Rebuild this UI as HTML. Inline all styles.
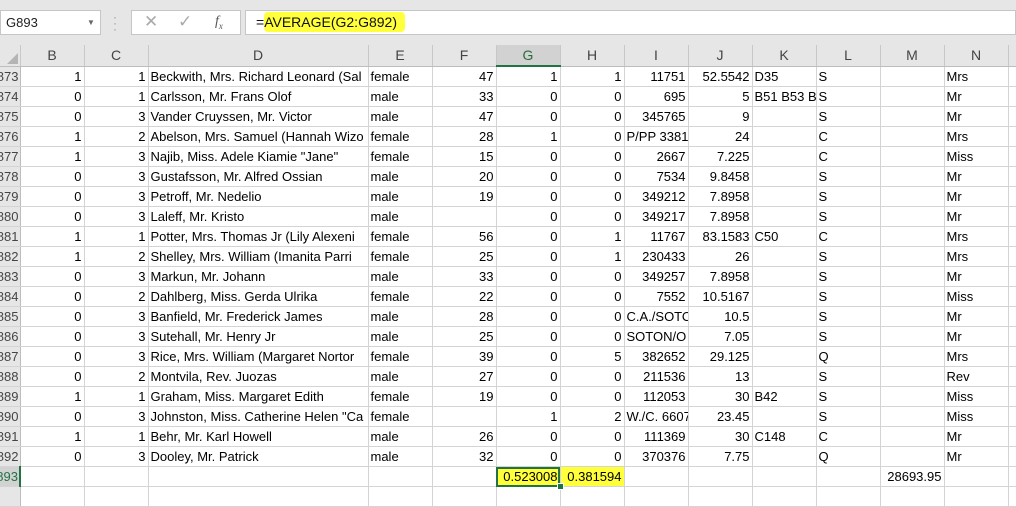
<!DOCTYPE html>
<html><head><meta charset="utf-8"><style>
body{margin:0;width:1016px;height:491px;overflow:hidden;background:#e6e6e6;font-family:"Liberation Sans",Arial,sans-serif;position:relative}
.box{position:absolute;top:10px;height:25px;background:#fff;border:1px solid #c6c6c6;box-sizing:border-box}
table{position:absolute;left:0;top:45px;width:1028px;border-collapse:collapse;table-layout:fixed;background:#fff;font-size:13px}
td{box-sizing:border-box;height:20px;padding:0 2px;border-right:1px solid #d4d4d4;border-bottom:1px solid #d4d4d4;white-space:nowrap;overflow:hidden;color:#000;line-height:19px}
tr.h td{background:#e6e6e6;text-align:center;color:#444;border-right:1px solid #c8c8c8;border-bottom:1px solid #bdbdbd;height:21px;font-size:14px}
td.rh{background:#e6e6e6;color:#444;text-align:right;padding:0 1px 0 0;border-right:1px solid #bdbdbd;direction:rtl}
.r{text-align:right}
.hl{background:#ffff3c}
</style></head><body>
<div class="box" style="left:0;width:101px;font-size:13px;color:#222;line-height:23px;padding-left:5px">G893<span style="position:absolute;left:86px;top:0;font-size:8px;color:#666">▼</span></div>
<div style="position:absolute;left:113px;top:14px;color:#999;font-size:12px;line-height:6px">·<br>·<br>·</div>
<div class="box" style="left:131px;width:110px;color:#aaa;font-size:17px;line-height:22px"><span style="position:absolute;left:12px">✕</span><span style="position:absolute;left:46px">✓</span><span style="position:absolute;left:83px;font-family:'Liberation Serif',serif;font-style:italic;font-size:14px;color:#555">f<sub style="font-size:9px">x</sub></span></div>
<div class="box" style="left:245px;width:771px;font-size:14px;line-height:23px;padding-left:10px;color:#111">=<span class="hl" style="border-radius:4px;padding:2px 8px 2px 0">AVERAGE(G2:G892)</span></div>
<table>
<colgroup><col style="width:20px"><col style="width:64px"><col style="width:64px"><col style="width:220px"><col style="width:64px"><col style="width:64px"><col style="width:64px"><col style="width:64px"><col style="width:64px"><col style="width:64px"><col style="width:64px"><col style="width:64px"><col style="width:64px"><col style="width:64px"><col style="width:20px"></colgroup>
<tr class="h"><td style="position:relative"><span style="position:absolute;right:2px;bottom:2px;width:0;height:0;border-left:11px solid transparent;border-bottom:11px solid #b4b4b4"></span></td><td>B</td><td>C</td><td>D</td><td>E</td><td>F</td><td style="background:#d2d2d2;color:#2a6b3e;border-bottom:2px solid #217346">G</td><td>H</td><td>I</td><td>J</td><td>K</td><td>L</td><td>M</td><td>N</td><td></td></tr>
<tr><td class="rh">873</td><td class="r">1</td><td class="r">1</td><td>Beckwith, Mrs. Richard Leonard (Sal</td><td>female</td><td class="r">47</td><td class="r">1</td><td class="r">1</td><td class="r">11751</td><td class="r">52.5542</td><td>D35</td><td>S</td><td></td><td>Mrs</td><td></td></tr>
<tr><td class="rh">874</td><td class="r">0</td><td class="r">1</td><td>Carlsson, Mr. Frans Olof</td><td>male</td><td class="r">33</td><td class="r">0</td><td class="r">0</td><td class="r">695</td><td class="r">5</td><td>B51 B53 B55</td><td>S</td><td></td><td>Mr</td><td></td></tr>
<tr><td class="rh">875</td><td class="r">0</td><td class="r">3</td><td>Vander Cruyssen, Mr. Victor</td><td>male</td><td class="r">47</td><td class="r">0</td><td class="r">0</td><td class="r">345765</td><td class="r">9</td><td></td><td>S</td><td></td><td>Mr</td><td></td></tr>
<tr><td class="rh">876</td><td class="r">1</td><td class="r">2</td><td>Abelson, Mrs. Samuel (Hannah Wizo</td><td>female</td><td class="r">28</td><td class="r">1</td><td class="r">0</td><td>P/PP 3381</td><td class="r">24</td><td></td><td>C</td><td></td><td>Mrs</td><td></td></tr>
<tr><td class="rh">877</td><td class="r">1</td><td class="r">3</td><td>Najib, Miss. Adele Kiamie "Jane"</td><td>female</td><td class="r">15</td><td class="r">0</td><td class="r">0</td><td class="r">2667</td><td class="r">7.225</td><td></td><td>C</td><td></td><td>Miss</td><td></td></tr>
<tr><td class="rh">878</td><td class="r">0</td><td class="r">3</td><td>Gustafsson, Mr. Alfred Ossian</td><td>male</td><td class="r">20</td><td class="r">0</td><td class="r">0</td><td class="r">7534</td><td class="r">9.8458</td><td></td><td>S</td><td></td><td>Mr</td><td></td></tr>
<tr><td class="rh">879</td><td class="r">0</td><td class="r">3</td><td>Petroff, Mr. Nedelio</td><td>male</td><td class="r">19</td><td class="r">0</td><td class="r">0</td><td class="r">349212</td><td class="r">7.8958</td><td></td><td>S</td><td></td><td>Mr</td><td></td></tr>
<tr><td class="rh">880</td><td class="r">0</td><td class="r">3</td><td>Laleff, Mr. Kristo</td><td>male</td><td class="r"></td><td class="r">0</td><td class="r">0</td><td class="r">349217</td><td class="r">7.8958</td><td></td><td>S</td><td></td><td>Mr</td><td></td></tr>
<tr><td class="rh">881</td><td class="r">1</td><td class="r">1</td><td>Potter, Mrs. Thomas Jr (Lily Alexeni</td><td>female</td><td class="r">56</td><td class="r">0</td><td class="r">1</td><td class="r">11767</td><td class="r">83.1583</td><td>C50</td><td>C</td><td></td><td>Mrs</td><td></td></tr>
<tr><td class="rh">882</td><td class="r">1</td><td class="r">2</td><td>Shelley, Mrs. William (Imanita Parri</td><td>female</td><td class="r">25</td><td class="r">0</td><td class="r">1</td><td class="r">230433</td><td class="r">26</td><td></td><td>S</td><td></td><td>Mrs</td><td></td></tr>
<tr><td class="rh">883</td><td class="r">0</td><td class="r">3</td><td>Markun, Mr. Johann</td><td>male</td><td class="r">33</td><td class="r">0</td><td class="r">0</td><td class="r">349257</td><td class="r">7.8958</td><td></td><td>S</td><td></td><td>Mr</td><td></td></tr>
<tr><td class="rh">884</td><td class="r">0</td><td class="r">2</td><td>Dahlberg, Miss. Gerda Ulrika</td><td>female</td><td class="r">22</td><td class="r">0</td><td class="r">0</td><td class="r">7552</td><td class="r">10.5167</td><td></td><td>S</td><td></td><td>Miss</td><td></td></tr>
<tr><td class="rh">885</td><td class="r">0</td><td class="r">3</td><td>Banfield, Mr. Frederick James</td><td>male</td><td class="r">28</td><td class="r">0</td><td class="r">0</td><td>C.A./SOTO</td><td class="r">10.5</td><td></td><td>S</td><td></td><td>Mr</td><td></td></tr>
<tr><td class="rh">886</td><td class="r">0</td><td class="r">3</td><td>Sutehall, Mr. Henry Jr</td><td>male</td><td class="r">25</td><td class="r">0</td><td class="r">0</td><td>SOTON/O</td><td class="r">7.05</td><td></td><td>S</td><td></td><td>Mr</td><td></td></tr>
<tr><td class="rh">887</td><td class="r">0</td><td class="r">3</td><td>Rice, Mrs. William (Margaret Nortor</td><td>female</td><td class="r">39</td><td class="r">0</td><td class="r">5</td><td class="r">382652</td><td class="r">29.125</td><td></td><td>Q</td><td></td><td>Mrs</td><td></td></tr>
<tr><td class="rh">888</td><td class="r">0</td><td class="r">2</td><td>Montvila, Rev. Juozas</td><td>male</td><td class="r">27</td><td class="r">0</td><td class="r">0</td><td class="r">211536</td><td class="r">13</td><td></td><td>S</td><td></td><td>Rev</td><td></td></tr>
<tr><td class="rh">889</td><td class="r">1</td><td class="r">1</td><td>Graham, Miss. Margaret Edith</td><td>female</td><td class="r">19</td><td class="r">0</td><td class="r">0</td><td class="r">112053</td><td class="r">30</td><td>B42</td><td>S</td><td></td><td>Miss</td><td></td></tr>
<tr><td class="rh">890</td><td class="r">0</td><td class="r">3</td><td>Johnston, Miss. Catherine Helen "Ca</td><td>female</td><td class="r"></td><td class="r">1</td><td class="r">2</td><td>W./C. 6607</td><td class="r">23.45</td><td></td><td>S</td><td></td><td>Miss</td><td></td></tr>
<tr><td class="rh">891</td><td class="r">1</td><td class="r">1</td><td>Behr, Mr. Karl Howell</td><td>male</td><td class="r">26</td><td class="r">0</td><td class="r">0</td><td class="r">111369</td><td class="r">30</td><td>C148</td><td>C</td><td></td><td>Mr</td><td></td></tr>
<tr><td class="rh">892</td><td class="r">0</td><td class="r">3</td><td>Dooley, Mr. Patrick</td><td>male</td><td class="r">32</td><td class="r">0</td><td class="r">0</td><td class="r">370376</td><td class="r">7.75</td><td></td><td>Q</td><td></td><td>Mr</td><td></td></tr>
<tr><td class="rh" style="background:#d2d2d2;color:#217346;border-right:2px solid #217346">893</td><td></td><td></td><td></td><td></td><td></td><td class="r" style="background:#ffff3c;outline:2px solid #217346;outline-offset:-2px">0.523008</td><td class="r" style="background:#ffff3c">0.381594</td><td></td><td></td><td></td><td></td><td class="r">28693.95</td><td></td><td></td></tr>
<tr><td class="rh"></td><td></td><td></td><td></td><td></td><td></td><td></td><td></td><td></td><td></td><td></td><td></td><td></td><td></td><td></td></tr>
</table>
<div style="position:absolute;left:557px;top:483px;width:5px;height:5px;background:#217346;border:1px solid #fff"></div>
</body></html>
